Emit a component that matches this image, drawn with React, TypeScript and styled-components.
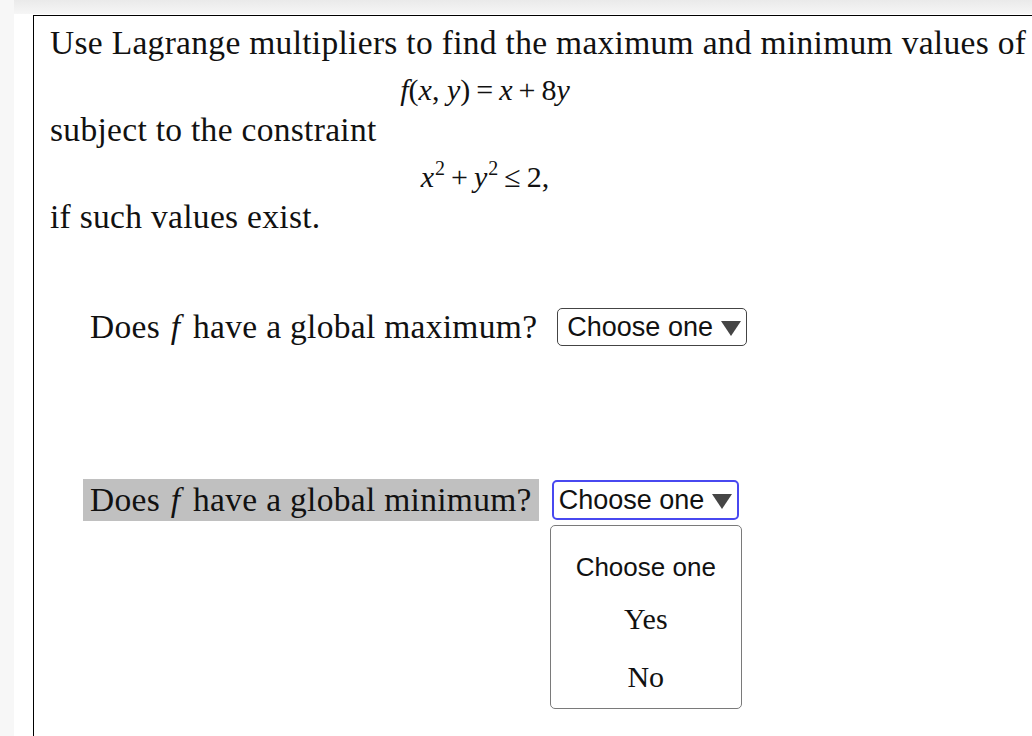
import styled, { createGlobalStyle } from "styled-components";

const GlobalStyle = createGlobalStyle`
    html, body {
        margin: 0;
        padding: 0;
        background: #ffffff;
        overflow: hidden;
    }
    body {
        width: 1032px;
        height: 736px;
    }
`;

const SERIF = `"Liberation Serif", "DejaVu Serif", serif`;
const SANS = `"Liberation Sans", Arial, sans-serif`;

const Page = styled.div`
    display: grid;
    grid-template-columns: 14px 1fr;
    grid-template-rows: 14px 1fr;
    width: 1032px;
    height: 736px;
    overflow: hidden;
`;

const Gutter = styled.div`
    grid-row: 1 / 3;
    background: #f7f7f7;
`;

const TopBar = styled.div`
    background: linear-gradient(#eaeaea, #f6f6f6);
`;

const Stage = styled.div`
    padding: 1px 0 0 19px;
    overflow: hidden;
`;

const Panel = styled.div`
    width: 1100px;
    height: 760px;
    border-top: 1px solid #000;
    border-left: 1px solid #000;
    padding: 7px 0 0 16px;
    box-sizing: border-box;
    font-family: ${SERIF};
    font-size: 33.5px;
    letter-spacing: 0.3px;
    color: #111;
`;

const Content = styled.div`
    width: 870px;
`;

const Line = styled.div`
    height: 40px;
    line-height: 40px;
    white-space: nowrap;
`;

const Display = styled.div`
    margin-top: 7px;
    height: 40px;
    line-height: 40px;
    text-align: center;
    white-space: nowrap;
    font-size: 30px;
    letter-spacing: 0;
`;

const V = styled.i`
    font-style: italic;
`;

const InlineVar = styled(V)`
    margin: 0 4px 0 2px;
`;

const Op = styled.span`
    padding: 0 6px;
`;

const Sup = styled.sup`
    font-size: 20px;
    line-height: 0;
    vertical-align: 12px;
    margin-left: 1px;
`;

const Question = styled.div<{ $top: number }>`
    display: flex;
    align-items: center;
    margin-top: ${(p) => p.$top}px;
    padding-left: 33px;
`;

const Label = styled.span<{ $active?: boolean }>`
    padding: 0 7px;
    height: 42px;
    line-height: 42px;
    background: ${(p) => (p.$active ? "#c0c0c0" : "transparent")};
    white-space: nowrap;
`;

const SelectWrap = styled.div`
    position: relative;
    margin-left: 13px;
    letter-spacing: 0;
`;

const Select = styled.div<{ $focused?: boolean }>`
    display: flex;
    align-items: center;
    gap: 8px;
    box-sizing: border-box;
    height: ${(p) => (p.$focused ? 40 : 38)}px;
    padding: 0 5px 0 ${(p) => (p.$focused ? 5 : 9)}px;
    border: ${(p) => (p.$focused ? "2px solid #4848f0" : "1px solid #444")};
    border-radius: 5px;
    background: #fff;
    font-family: ${SANS};
    font-size: 27px;
    color: #111;
`;

const Arrow = styled.span`
    width: 0;
    height: 0;
    border-left: 10px solid transparent;
    border-right: 10px solid transparent;
    border-top: 15px solid #454545;
    margin-top: 2px;
`;

const Menu = styled.div`
    position: absolute;
    top: 45px;
    left: -2px;
    width: 192px;
    box-sizing: border-box;
    height: 184px;
    border: 1px solid #7a7a7a;
    border-radius: 5px;
    background: #fff;
    display: flex;
    flex-direction: column;
    align-items: center;
    padding-top: 20px;
`;

const Option = styled.div<{ $sans?: boolean }>`
    height: ${(p) => (p.$sans ? 44 : 58)}px;
    line-height: ${(p) => (p.$sans ? 42 : 58)}px;
    font-family: ${(p) => (p.$sans ? SANS : SERIF)};
    font-size: ${(p) => (p.$sans ? 26 : 30)}px;
    color: #111;
`;

const ChooseBox = ({ focused, open }: { focused?: boolean; open?: boolean }) => (
    <SelectWrap>
        <Select $focused={focused}>
            <span>Choose one</span>
            <Arrow />
        </Select>
        {open && (
            <Menu>
                <Option $sans>Choose one</Option>
                <Option>Yes</Option>
                <Option>No</Option>
            </Menu>
        )}
    </SelectWrap>
);

export default function App() {
    return (
        <>
            <GlobalStyle />
            <Page>
                <Gutter />
                <TopBar />
                <Stage>
                    <Panel>
                        <Content>
                            <Line>Use Lagrange multipliers to find the maximum and minimum values of</Line>
                            <Display>
                                <V>f</V>(<V>x</V>, <V>y</V>)<Op>=</Op><V>x</V><Op>+</Op>8<V>y</V>
                            </Display>
                            <Line>subject to the constraint</Line>
                            <Display>
                                <V>x</V><Sup>2</Sup><Op>+</Op><V>y</V><Sup>2</Sup><Op>≤</Op>2,
                            </Display>
                            <Line>if such values exist.</Line>
                        </Content>
                        <Question $top={69}>
                            <Label>
                                Does <InlineVar>f</InlineVar> have a global maximum?
                            </Label>
                            <ChooseBox />
                        </Question>
                        <Question $top={131}>
                            <Label $active>
                                Does <InlineVar>f</InlineVar> have a global minimum?
                            </Label>
                            <ChooseBox focused open />
                        </Question>
                    </Panel>
                </Stage>
            </Page>
        </>
    );
}
